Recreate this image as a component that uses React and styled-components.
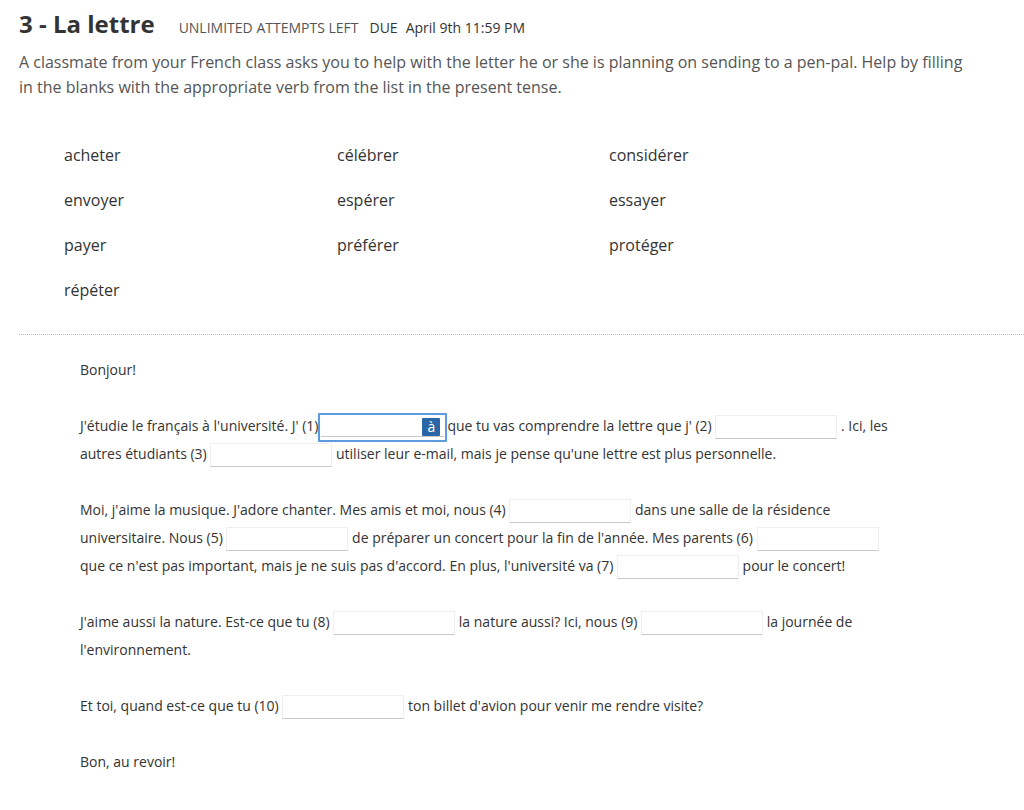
import React from 'react';
import styled, { createGlobalStyle } from 'styled-components';

const VERBS = [
  'acheter', 'célébrer', 'considérer',
  'envoyer', 'espérer', 'essayer',
  'payer', 'préférer', 'protéger',
  'répéter'
];

const GlobalStyle = createGlobalStyle`
  body {
    margin: 0;
    background: #fff;
    font-family: "Open Sans", "Liberation Sans", sans-serif;
    color: #333;
  }
`;

const Page = styled.div`
  padding: 10px 0 20px 19px;
`;

const Header = styled.div`
  display: flex;
  align-items: baseline;
`;

const Title = styled.h1`
  margin: 0;
  font-size: 24px;
  font-weight: 700;
  color: #333;
  line-height: 28px;
`;

const Meta = styled.span`
  margin-left: ${({ $gap }) => $gap}px;
  font-size: 14px;
  color: ${({ $dark }) => $dark ? '#333' : '#555'};
  text-transform: ${({ $upper }) => $upper ? 'uppercase' : 'none'};
`;

const Description = styled.p`
  margin: 12px 0 0;
  max-width: 950px;
  font-size: 16px;
  line-height: 25px;
  color: #555;
`;

const VerbGrid = styled.ul`
  list-style: none;
  margin: 44px 0 0;
  padding: 0 0 0 45px;
  display: grid;
  grid-template-columns: 273px 272px 272px;
  grid-auto-rows: 45px;
`;

const Verb = styled.li`
  font-size: 16px;
  line-height: 22px;
  color: #333;
`;

const Divider = styled.hr`
  margin: 10px 0 0;
  border: 0;
  border-top: 1px dotted #bbb;
`;

const Letter = styled.div`
  padding: 21px 0 0 61px;
  width: 822px;
`;

const Para = styled.p`
  margin: 0 0 28px;
  font-size: 14px;
  line-height: 28px;
  color: #333;
`;

const Blank = styled.span`
  display: inline-block;
  width: 120px;
  height: 22px;
  vertical-align: middle;
  border: 1px solid #efefef;
  border-bottom-color: #c8c8c8;
  box-sizing: content-box;
`;

const FocusBlank = styled.span`
  display: inline-flex;
  align-items: center;
  justify-content: flex-end;
  box-sizing: border-box;
  width: 129px;
  height: 29px;
  margin: -3px 0;
  padding-right: 5px;
  vertical-align: middle;
  border: 2px solid #5b9be0;
  border-radius: 1px;
  box-shadow: inset 0 -2px 0 1px #fff, inset 0 -3px 0 1px #c8c8c8;
`;

const AccentKey = styled.span`
  display: inline-flex;
  align-items: center;
  justify-content: center;
  width: 18px;
  height: 18px;
  background: #2b67a6;
  color: #fff;
  font-size: 14px;
  line-height: 1;
  border-radius: 1px;
`;

export default function App() {
  return (
    <Page>
      <GlobalStyle />
      <Header>
        <Title>3 - La lettre</Title>
        <Meta $gap={24} $upper>Unlimited attempts left</Meta>
        <Meta $gap={11} $dark>DUE</Meta>
        <Meta $gap={8} $dark>April 9th 11:59 PM</Meta>
      </Header>
      <Description>
        A classmate from your French class asks you to help with the letter he or she is planning on sending to a pen-pal. Help by filling in the blanks with the appropriate verb from the list in the present tense.
      </Description>

      <VerbGrid>
        {VERBS.map(v => <Verb key={v}>{v}</Verb>)}
      </VerbGrid>

      <Divider />

      <Letter>
        <Para>Bonjour!</Para>
        <Para>
          J'étudie le français à l'université. J' (1)<FocusBlank><AccentKey>à</AccentKey></FocusBlank>que tu vas comprendre la lettre que j' (2) <Blank /> . Ici, les autres étudiants (3) <Blank /> utiliser leur e-mail, mais je pense qu'une lettre est plus personnelle.
        </Para>
        <Para>
          Moi, j'aime la musique. J'adore chanter. Mes amis et moi, nous (4) <Blank /> dans une salle de la résidence universitaire. Nous (5) <Blank /> de préparer un concert pour la fin de l'année. Mes parents (6) <Blank /> que ce n'est pas important, mais je ne suis pas d'accord. En plus, l'université va (7) <Blank /> pour le concert!
        </Para>
        <Para>
          J'aime aussi la nature. Est-ce que tu (8) <Blank /> la nature aussi? Ici, nous (9) <Blank /> la journée de l'environnement.
        </Para>
        <Para>
          Et toi, quand est-ce que tu (10) <Blank /> ton billet d'avion pour venir me rendre visite?
        </Para>
        <Para>Bon, au revoir!</Para>
      </Letter>
    </Page>
  );
}
